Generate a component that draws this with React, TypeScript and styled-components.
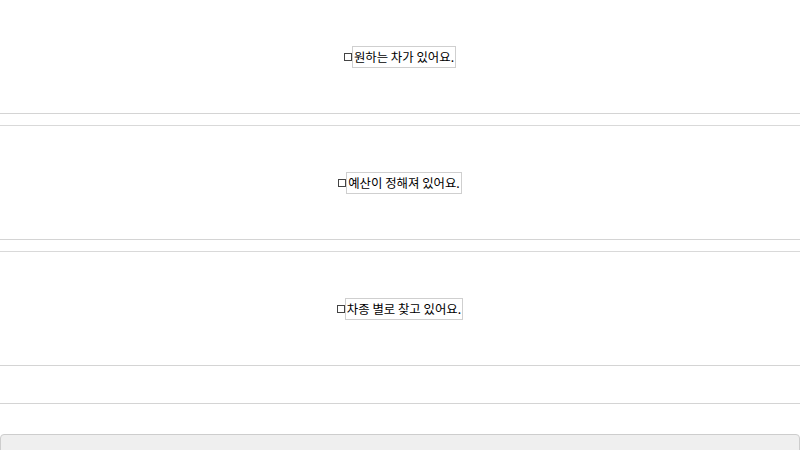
import React from "react";
import styled, { createGlobalStyle } from "styled-components";

const Global = createGlobalStyle`
  html, body { margin: 0; padding: 0; background: #fff; height: 450px; overflow: hidden; }
  body { font-family: "Noto Sans CJK KR", "Noto Sans", sans-serif; color: #000; }
`;

const Page = styled.div`
  display: flex;
  flex-direction: column;
  height: 450px;
  overflow: hidden;
`;

const Card = styled.label`
  flex: none;
  height: 113px;
  border-top: 1px solid #d9d9d9;
  border-bottom: 1px solid #d4d4d4;
  margin-bottom: 11px;
  display: flex;
  align-items: center;
  justify-content: center;
  &:first-child { margin-top: -1px; }
`;

const Box = styled.span`
  width: 8px;
  height: 8px;
  border: 1px solid #444;
  box-sizing: border-box;
  display: inline-block;
  margin-top: 1px;
`;

const Text = styled.span`
  font-size: 12.4px;
  line-height: 20px;
  border: 1px solid #cfcfcf;
  padding: 0 1px;
`;

const Divider = styled.div`
  flex: none;
  height: 26px;
  border-bottom: 1px solid #d4d4d4;
`;

const Button = styled.button`
  flex: none;
  margin-top: 30px;
  height: 40px;
  width: 100%;
  background: #efefef;
  border: 1px solid #cdcdcd;
  border-radius: 4px;
`;

const items = ["원하는 차가 있어요.", "예산이 정해져 있어요.", "차종 별로 찾고 있어요."];

export default function App() {
  return (
    <Page>
      <Global />
      {items.map((t) => (
        <Card key={t}>
          <Box />
          <Text>{t}</Text>
        </Card>
      ))}
      <Divider />
      <Button />
    </Page>
  );
}
